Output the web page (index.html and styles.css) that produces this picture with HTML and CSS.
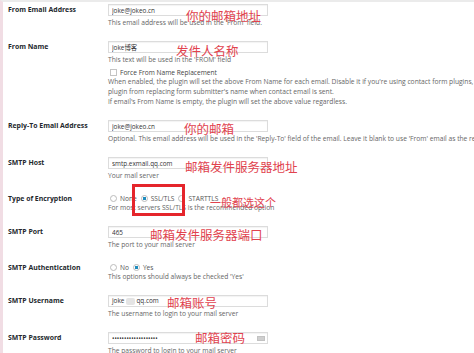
FILE: index.html
```html
<!DOCTYPE html>
<html>
<head>
<meta charset="utf-8">
<link rel="stylesheet" href="styles.css">
</head>
<body>
<div class="page">
  <div class="form">
    <div class="row">
      <div class="label">From Email Address</div>
      <div class="field">
        <input class="text" type="text" value="joke@jokeo.cn">
        <p class="desc">This email address will be used in the 'From' field.</p>
      </div>
    </div>
    <div class="row">
      <div class="label">From Name</div>
      <div class="field">
        <input class="text" type="text" value="joke博客">
        <p class="desc">This text will be used in the 'FROM' field</p>
        <label class="check"><input class="box" type="checkbox"> Force From Name Replacement</label>
        <p class="desc desc--tight">When enabled, the plugin will set the above From Name for each email. Disable it if you're using contact form plugins, it will prevent the<br>plugin from replacing form submitter's name when contact email is sent.<br>If email's From Name is empty, the plugin will set the above value regardless.</p>
      </div>
    </div>
    <div class="row">
      <div class="label">Reply-To Email Address</div>
      <div class="field">
        <input class="text" type="text" value="joke@jokeo.cn">
        <p class="desc">Optional. This email address will be used in the 'Reply-To' field of the email. Leave it blank to use 'From' email as the reply-to value.</p>
      </div>
    </div>
    <div class="row">
      <div class="label">SMTP Host</div>
      <div class="field">
        <input class="text" type="text" value="smtp.exmail.qq.com">
        <p class="desc">Your mail server</p>
      </div>
    </div>
    <div class="row row--choice">
      <div class="label">Type of Encryption</div>
      <div class="field">
        <div class="choices">
          <label class="opt"><input class="radio" type="radio" name="enc"> None</label>
          <label class="opt"><input class="radio" type="radio" name="enc" checked> SSL/TLS</label>
          <label class="opt"><input class="radio" type="radio" name="enc"> STARTTLS</label>
        </div>
        <p class="desc desc--choice">For most servers SSL/TLS is the recommended option</p>
      </div>
    </div>
    <div class="row">
      <div class="label">SMTP Port</div>
      <div class="field">
        <input class="text" type="text" value="465">
        <p class="desc">The port to your mail server</p>
      </div>
    </div>
    <div class="row row--choice">
      <div class="label">SMTP Authentication</div>
      <div class="field">
        <div class="choices">
          <label class="opt"><input class="radio" type="radio" name="auth"> No</label>
          <label class="opt"><input class="radio" type="radio" name="auth" checked> Yes</label>
        </div>
        <p class="desc desc--choice">This options should always be checked 'Yes'</p>
      </div>
    </div>
    <div class="row">
      <div class="label">SMTP Username</div>
      <div class="field">
        <div class="text text--fake">joke<span class="blur"></span>qq.com</div>
        <p class="desc">The username to login to your mail server</p>
      </div>
    </div>
    <div class="row">
      <div class="label">SMTP Password</div>
      <div class="field field--pw">
        <input class="text" type="password" value="xxxxxxxxxxxxxxxxxxx">
        <span class="keyicon"></span>
        <p class="desc">The password to login to your mail server</p>
      </div>
    </div>
  </div>

  <div class="mark"></div>
  <div class="note note--1">你的邮箱地址</div>
  <div class="note note--2">发件人名称</div>
  <div class="note note--3">你的邮箱</div>
  <div class="note note--4">邮箱发件服务器地址</div>
  <div class="note note--5">一般都选这个</div>
  <div class="note note--6">邮箱发件服务器端口</div>
  <div class="note note--7">邮箱账号</div>
  <div class="note note--8">邮箱密码</div>
</div>
</body>
</html>
```
FILE: styles.css
```css
html, body {
  margin: 0;
  padding: 0;
  background: #fff;
  overflow: hidden;
}
.page {
  position: relative;
  width: 474px;
  height: 353px;
  overflow: hidden;
  box-sizing: border-box;
  border-left: 3px solid #f1dde4;
  border-top: 2px solid #ebebeb;
  padding-left: 5px;
  font-family: "Open Sans", "Noto Sans CJK SC", sans-serif;
  color: #444;
}
.form {
  margin-top: -4px;
}
.row {
  display: grid;
  grid-template-columns: 100px 1fr;
  padding: 6px 0 7px;
}
.row--choice {
  padding-top: 5px;
}
.label {
  font-size: 6.9px;
  font-weight: 700;
  line-height: 12px;
  color: #23282d;
  white-space: nowrap;
}
.field {
  position: relative;
  white-space: nowrap;
}
.text {
  display: block;
  box-sizing: border-box;
  width: 160px;
  height: 12px;
  margin: 0;
  padding: 0 3px;
  border: 1px solid #dcdcdc;
  box-shadow: inset 0 1px 1px rgba(0,0,0,0.05);
  font-family: "Open Sans", "Noto Sans CJK SC", sans-serif;
  font-size: 6.4px;
  line-height: 10px;
  color: #333;
  background: #fff;
  outline: none;
}
.text--fake {
  display: flex;
  align-items: center;
}
.blur {
  display: inline-block;
  width: 9px;
  height: 7px;
  margin: 0 1px 0 2px;
  background: #e4e4e4;
  border-radius: 2px;
}
.desc {
  margin: 2px 0 0;
  font-size: 6.7px;
  line-height: 10px;
  color: #666;
}
.desc--tight {
  margin-top: 0;
}
.desc--choice {
  margin-top: 0;
}
.check {
  display: flex;
  align-items: center;
  gap: 3px;
  height: 10px;
  margin-top: 2px;
  padding-left: 2px;
  font-size: 6.6px;
  color: #444;
}
.box {
  appearance: none;
  width: 7px;
  height: 7px;
  margin: 0;
  border: 1px solid #c4c4c4;
  background: #fff;
}
.choices {
  display: flex;
  align-items: center;
  gap: 4px;
  height: 10px;
  padding-left: 2px;
}
.opt {
  display: flex;
  align-items: center;
  gap: 3px;
  font-size: 6.6px;
  color: #555;
}
.radio {
  appearance: none;
  width: 7px;
  height: 7px;
  margin: 0;
  border: 1px solid #bbb;
  border-radius: 50%;
  background: #fff;
}
.radio:checked {
  background: radial-gradient(circle, #1e8cbe 0 1.6px, #fff 2px);
}
.keyicon {
  position: absolute;
  left: 149px;
  top: 4px;
  width: 8px;
  height: 5px;
  background: #cfcfcf;
  border: 1px solid #c2c2c2;
  box-sizing: border-box;
}
.mark {
  position: absolute;
  left: 129px;
  top: 182px;
  width: 47px;
  height: 26px;
  border: 3px solid #e5252b;
}
.note {
  position: absolute;
  font-family: "Noto Sans CJK SC", sans-serif;
  font-size: 12.5px;
  line-height: 13px;
  color: #e1424e;
  white-space: nowrap;
}
.note--1 { left: 183px; top: 7px; }
.note--2 { left: 173px; top: 42px; }
.note--3 { left: 181px; top: 120px; }
.note--4 { left: 182px; top: 158px; }
.note--5 { left: 207px; top: 194px; font-size: 11px; }
.note--6 { left: 147px; top: 226px; }
.note--7 { left: 164px; top: 294px; }
.note--8 { left: 192px; top: 329px; }
```
